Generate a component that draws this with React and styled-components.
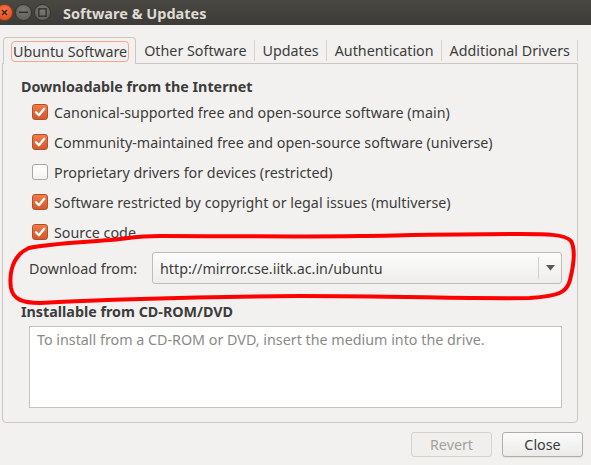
import React from "react";
import styled, { createGlobalStyle } from "styled-components";

const Global = createGlobalStyle`
  html, body { margin: 0; padding: 0; background: #f2f1f0; }
  body { font-family: "Noto Sans", "Open Sans", "DejaVu Sans", sans-serif; }
  * { box-sizing: border-box; }
`;

const Window = styled.div`
  position: relative;
  width: 591px;
  height: 465px;
  overflow: hidden;
  background: #f2f1f0;
  display: flex;
  flex-direction: column;
  color: #3c3c3c;
  font-size: 14.3px;
`;

const TitleBar = styled.div`
  height: 25px;
  flex: none;
  display: flex;
  align-items: center;
  background: linear-gradient(#4a4843, #3c3b37);
`;

const WinButtons = styled.div`
  display: flex;
  align-items: center;
  gap: 2px;
  margin-left: -4px;
  width: 67px;
  flex: none;
`;

const WinButton = styled.div`
  width: 17px;
  height: 17px;
  border-radius: 50%;
  display: flex;
  align-items: center;
  justify-content: center;
  background: ${(p) =>
    p.$close
      ? "radial-gradient(circle at 50% 35%, #f4784a, #d9451a)"
      : "radial-gradient(circle at 50% 35%, #7b7973, #5c5a55)"};
  border: 1px solid ${(p) => (p.$close ? "#9e3412" : "#34332f")};
`;

const Title = styled.div`
  color: #dfdbd2;
  font-weight: bold;
  font-size: 14.5px;
`;

const Body = styled.div`
  flex: 1;
  display: flex;
  flex-direction: column;
  padding: 12px 0 0 2px;
`;

const TabStrip = styled.div`
  display: flex;
  align-items: flex-end;
  height: 26px;
  padding-left: 1px;
`;

const ActiveTab = styled.div`
  height: 27px;
  margin-bottom: -1px;
  border: 1px solid #cdc7c2;
  border-bottom: none;
  border-radius: 4px 4px 0 0;
  background: #f2f1f0;
  padding: 3px 6px 2px 7px;
  position: relative;
  z-index: 1;
`;

const FocusRing = styled.div`
  border: 1px solid #f3a78b;
  border-radius: 4px;
  height: 21px;
  padding: 0 1px;
  display: flex;
  align-items: center;
`;

const Tab = styled.div`
  height: 21px;
  padding: 0 7px 0 8px;
  border-right: 1px solid #d6d1cc;
  display: flex;
  align-items: center;
  position: relative;
  top: -2px;
`;

const Panel = styled.div`
  width: 576px;
  height: 360px;
  border: 1px solid #cdc7c2;
  border-radius: 0 0 4px 4px;
  padding: 13px 15px 12px 18px;
  display: flex;
  flex-direction: column;
`;

const SectionTitle = styled.div`
  font-weight: bold;
  line-height: 20px;
  margin-top: ${(p) => p.$mt || 0}px;
`;

const CheckRow = styled.label`
  height: 30px;
  display: flex;
  align-items: center;
  padding-left: 11px;
  gap: 6px;
`;

const Box = styled.span`
  width: 16px;
  height: 16px;
  border-radius: 3px;
  display: flex;
  align-items: center;
  justify-content: center;
  flex: none;
  background: ${(p) =>
    p.$on ? "linear-gradient(#f07c48, #d2592b)" : "linear-gradient(#ffffff, #f4f4f4)"};
  border: 1px solid ${(p) => (p.$on ? "#b3502b" : "#aaa6a1")};
`;

const DownloadRow = styled.div`
  display: flex;
  align-items: center;
  margin-top: 5px;
  padding-left: 8px;
`;

const FieldLabel = styled.div`
  width: 123px;
  flex: none;
`;

const Combo = styled.div`
  flex: 1;
  height: 32px;
  border: 1px solid #bfbbb6;
  border-radius: 3px;
  background: linear-gradient(#fcfcfc, #eeedec);
  display: flex;
  align-items: center;
`;

const ComboText = styled.div`
  flex: 1;
  padding-left: 7px;
`;

const ComboArrow = styled.div`
  width: 23px;
  height: 22px;
  border-left: 1px solid #d2cec9;
  display: flex;
  align-items: center;
  justify-content: center;
`;

const TextArea = styled.div`
  margin: 4px 0 0 8px;
  height: 82px;
  background: #fff;
  border: 1px solid #c6c2bd;
  padding: 3px 7px;
  color: #8b8a88;
  line-height: 20px;
`;

const ButtonRow = styled.div`
  display: flex;
  justify-content: flex-end;
  gap: 10px;
  padding: 9px 8px 0 0;
`;

const Button = styled.div`
  width: 81px;
  height: 25px;
  border-radius: 3px;
  display: flex;
  align-items: center;
  justify-content: center;
  border: 1px solid ${(p) => (p.$disabled ? "#d6d2cd" : "#b1aeaa")};
  background: ${(p) =>
    p.$disabled ? "#f0efee" : "linear-gradient(#fbfbfb, #ebeae9)"};
  color: ${(p) => (p.$disabled ? "#a4a19d" : "#3c3c3c")};
  box-shadow: ${(p) => (p.$disabled ? "none" : "0 1px 0 rgba(0,0,0,0.06)")};
`;

const Annotation = styled.svg`
  position: absolute;
  left: 0;
  top: 0;
  pointer-events: none;
`;

const Check = () => (
  <svg width="12" height="12" viewBox="0 0 12 12">
    <path d="M2 6.3 L4.9 9.2 L10.2 2.8" fill="none" stroke="#fff" strokeWidth="2.3" strokeLinecap="round" strokeLinejoin="round" />
  </svg>
);

const sources = [
  ["Canonical-supported free and open-source software (main)", true],
  ["Community-maintained free and open-source software (universe)", true],
  ["Proprietary drivers for devices (restricted)", false],
  ["Software restricted by copyright or legal issues (multiverse)", true],
  ["Source code", true],
];

const tabs = ["Other Software", "Updates", "Authentication", "Additional Drivers"];

export default function App() {
  return (
    <>
      <Global />
      <Window>
        <TitleBar>
          <WinButtons>
            <WinButton $close>
              <svg width="7" height="7" viewBox="0 0 7 7">
                <path d="M1 1 L6 6 M6 1 L1 6" stroke="#3a1a0c" strokeWidth="1.3" />
              </svg>
            </WinButton>
            <WinButton>
              <svg width="9" height="3" viewBox="0 0 9 3">
                <rect x="0" y="0.5" width="9" height="1.6" fill="#34332f" />
              </svg>
            </WinButton>
            <WinButton>
              <svg width="9" height="9" viewBox="0 0 9 9">
                <rect x="0.8" y="0.8" width="7.4" height="7.4" fill="none" stroke="#34332f" strokeWidth="1.4" />
              </svg>
            </WinButton>
          </WinButtons>
          <Title>Software &amp; Updates</Title>
        </TitleBar>
        <Body>
          <TabStrip>
            <ActiveTab>
              <FocusRing>Ubuntu Software</FocusRing>
            </ActiveTab>
            {tabs.map((t) => (
              <Tab key={t}>{t}</Tab>
            ))}
          </TabStrip>
          <Panel>
            <SectionTitle>Downloadable from the Internet</SectionTitle>
            {sources.map(([label, on]) => (
              <CheckRow key={label}>
                <Box $on={on}>{on && <Check />}</Box>
                {label}
              </CheckRow>
            ))}
            <DownloadRow>
              <FieldLabel>Download from:</FieldLabel>
              <Combo>
                <ComboText>http://mirror.cse.iitk.ac.in/ubuntu</ComboText>
                <ComboArrow>
                  <svg width="9" height="6" viewBox="0 0 9 6">
                    <path d="M0 0 L9 0 L4.5 5.5 Z" fill="#5b5a57" />
                  </svg>
                </ComboArrow>
              </Combo>
            </DownloadRow>
            <SectionTitle $mt={18}>Installable from CD-ROM/DVD</SectionTitle>
            <TextArea>To install from a CD-ROM or DVD, insert the medium into the drive.</TextArea>
          </Panel>
          <ButtonRow>
            <Button $disabled>Revert</Button>
            <Button>Close</Button>
          </ButtonRow>
        </Body>
        <Annotation width="591" height="465" viewBox="0 0 591 465">
          <path
            d="M29 248 C 45 244, 70 243, 110 240 C 130 238, 140 236, 160 236 C 230 236, 300 237, 360 236 C 420 235, 460 234, 520 234 C 545 234, 565 234, 571 241 C 576 250, 573 268, 570 280 C 567 292, 560 296, 530 298 C 470 299, 400 296, 300 296 C 200 297, 120 299, 40 303 C 22 303, 13 299, 11 288 C 9 275, 12 262, 20 254 C 24 250, 27 249, 29 248"
            fill="none"
            stroke="#ff0000"
            strokeWidth="4"
            strokeLinecap="round"
            strokeLinejoin="round"
          />
        </Annotation>
      </Window>
    </>
  );
}
